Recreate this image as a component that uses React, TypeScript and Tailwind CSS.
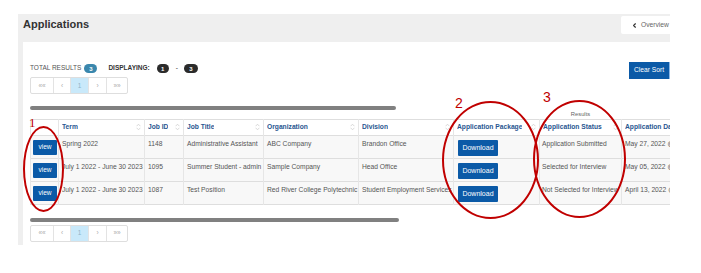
import { ChevronLeft } from 'lucide-react';

const rows = [
    {
        term: 'Spring 2022',
        jobId: '1148',
        title: 'Administrative Assistant',
        org: 'ABC Company',
        division: 'Brandon Office',
        status: 'Application Submitted',
        date: 'May 27, 2022 @ 10:42 AM'
    },
    {
        term: 'July 1 2022 - June 30 2023',
        jobId: '1095',
        title: 'Summer Student - admin',
        org: 'Sample Company',
        division: 'Head Office',
        status: 'Selected for Interview',
        date: 'May 05, 2022 @ 2:15 PM'
    },
    {
        term: 'July 1 2022 - June 30 2023',
        jobId: '1087',
        title: 'Test Position',
        org: 'Red River College Polytechnic',
        division: 'Student Employment Services',
        status: 'Not Selected for Interview',
        date: 'April 13, 2022 @ 9:03 AM'
    }
];

const columns = [
    { label: '', width: 'w-[28px]', sort: false },
    { label: 'Term', width: 'w-[86px]', sort: true },
    { label: 'Job ID', width: 'w-[39px]', sort: true },
    { label: 'Job Title', width: 'w-[80px]', sort: true },
    { label: 'Organization', width: 'w-[95px]', sort: true },
    { label: 'Division', width: 'w-[95px]', sort: true },
    { label: 'Application Package', width: 'w-[86px]', sort: true },
    { label: 'Application Status', width: 'w-[82px]', sort: true },
    { label: 'Application Date', width: 'w-[80px]', sort: true }
];

const SortIcon = () => (
    <svg width="5" height="8" viewBox="0 0 5 8" className="shrink-0">
        <path d="M0.6 3.2 L2.5 1.2 L4.4 3.2 M0.6 4.8 L2.5 6.8 L4.4 4.8" fill="none" stroke="#cfcfcf" strokeWidth="0.8" />
    </svg>
);

const Pagination = () => {
    const items = [
        { label: '««', w: 'w-[22px]' },
        { label: '‹', w: 'w-[17px]' },
        { label: '1', w: 'w-[18px]', active: true },
        { label: '›', w: 'w-[18px]' },
        { label: '»»', w: 'w-[21px]' }
    ];
    return (
        <div className="flex w-fit rounded-[2px] border border-[#dedede] text-[6.5px] text-[#aaa]">
            {items.map((item, i) => (
                <span
                    key={i}
                    className={`flex h-[15px] items-center justify-center ${item.w} ${i > 0 ? 'border-l border-[#e3e3e3]' : ''} ${item.active ? 'bg-[#c9e9fa] text-[#8fb4c8]' : ''}`}
                >
                    {item.label}
                </span>
            ))}
        </div>
    );
};

export default function App() {
    return (
        <div className="relative h-[273px] w-[701px] overflow-hidden bg-white font-['Liberation_Sans',Arial,sans-serif]">
            <div className="pt-[14px] pl-[18px]">
                <section className="w-[652px] overflow-hidden bg-[#efefef] pl-[5px]">
                    {/* Title bar */}
                    <div className="flex h-[28px] items-start">
                        <h1 className="mt-[5px] text-[11px] font-bold leading-none text-[#333]">Applications</h1>
                        <button className="ml-auto mr-[-11px] mt-[2px] flex h-[18px] w-[60px] shrink-0 items-center gap-[3px] rounded-[2px] bg-white pl-[10px] text-[6.7px] text-[#666]">
                            <ChevronLeft size={7} strokeWidth={4} className="text-[#333]" />
                            Overview
                        </button>
                    </div>

                    {/* Card */}
                    <div className="w-[693px] bg-white px-[7px] pb-[3px]">
                        <div className="flex items-start">
                            <div className="pt-[22px]">
                                <div className="flex h-[9px] items-center text-[6.5px] leading-none">
                                    <span className="text-[#555]">TOTAL RESULTS</span>
                                    <span className="ml-[3px] flex h-[9px] w-[13px] items-center justify-center rounded-full bg-[#3a87ad] text-[6px] font-bold text-white">3</span>
                                    <span className="ml-[11px] font-bold text-[#333]">DISPLAYING:</span>
                                    <span className="ml-[7px] flex h-[9px] w-[12px] items-center justify-center rounded-full bg-[#2b2b2b] text-[6px] font-bold text-white">1</span>
                                    <span className="ml-[7px] text-[#333]">-</span>
                                    <span className="ml-[6px] flex h-[9px] w-[14px] items-center justify-center rounded-full bg-[#2b2b2b] text-[6px] font-bold text-white">3</span>
                                </div>
                                <div className="mt-[4px]">
                                    <Pagination />
                                </div>
                            </div>
                            <div className="ml-auto mt-[20px] flex">
                                <button className="h-[17px] w-[40px] bg-[#0b5aa7] text-[6.7px] text-white">Clear Sort</button>
                                {/* next toolbar button, only its edge is in view */}
                                <span className="h-[17px] w-[40px] border-l-2 border-[#8db8e6] bg-[#0b5aa7]" />
                            </div>
                        </div>

                        <div className="mt-[12px] h-[4px] w-[366px] rounded-full bg-[#808080]" />

                        <table className="w-[671px] table-fixed border-collapse text-[6.7px]">
                            <colgroup>
                                {columns.map((c, i) => (
                                    <col key={i} className={c.width} />
                                ))}
                            </colgroup>
                            <thead>
                                <tr className="h-[9px]">
                                    <th colSpan={7} />
                                    <th className="pt-[1px] text-center text-[5.8px] font-normal leading-none text-[#666]">Results</th>
                                    <th />
                                </tr>
                                <tr className="h-[16px] border-y border-[#dedede]">
                                    {columns.map((c, i) => (
                                        <th key={i} className="overflow-hidden whitespace-nowrap border-x border-[#e6e6e6] px-[3px] text-left font-bold text-[#285690]">
                                            {c.label && (
                                                <div className="flex items-center justify-between gap-[2px]">
                                                    <span className="overflow-hidden">{c.label}</span>
                                                    {c.sort && <SortIcon />}
                                                </div>
                                            )}
                                        </th>
                                    ))}
                                </tr>
                            </thead>
                            <tbody className="text-[#555]">
                                {rows.map((r, i) => (
                                    <tr key={i} className="border-b border-[#dedede] bg-[#f8f8f8] align-top leading-[8px]">
                                        <td className="border-x border-[#e6e6e6] pl-[2px] pt-[4px] pb-[3px]">
                                            <button className="h-[15px] w-[24px] rounded-[1px] bg-[#0b5aa7] text-[6.5px] text-white">view</button>
                                        </td>
                                        <td className="overflow-hidden whitespace-nowrap border-x border-[#e6e6e6] px-[3px] pt-[4px]">{r.term}</td>
                                        <td className="overflow-hidden whitespace-nowrap border-x border-[#e6e6e6] px-[3px] pt-[4px]">{r.jobId}</td>
                                        <td className="overflow-hidden whitespace-nowrap border-x border-[#e6e6e6] px-[3px] pt-[4px]">{r.title}</td>
                                        <td className="overflow-hidden whitespace-nowrap border-x border-[#e6e6e6] px-[3px] pt-[4px]">{r.org}</td>
                                        <td className="overflow-hidden whitespace-nowrap border-x border-[#e6e6e6] px-[3px] pt-[4px]">{r.division}</td>
                                        <td className="border-x border-[#e6e6e6] pl-[4px] pt-[4px]">
                                            <button className="h-[16px] w-[40px] rounded-[1px] bg-[#0b5aa7] text-[7px] text-white">Download</button>
                                        </td>
                                        <td className="overflow-hidden whitespace-nowrap border-x border-[#e6e6e6] px-[2px] pt-[4px]">{r.status}</td>
                                        <td className="overflow-hidden whitespace-nowrap border-x border-[#e6e6e6] px-[3px] pt-[4px]">{r.date}</td>
                                    </tr>
                                ))}
                            </tbody>
                        </table>

                        <div className="mt-[13px] h-[4px] w-[369px] rounded-full bg-[#808080]" />
                        <div className="mt-[3px]">
                            <Pagination />
                        </div>
                    </div>
                </section>
            </div>

            {/* Red annotation marks */}
            <span className="absolute left-[29px] top-[116px] font-['Liberation_Serif',serif] text-[13px] leading-none text-[#c00000]">1</span>
            <div className="absolute left-[23px] top-[126px] h-[86px] w-[41px] rounded-[50%] border-2 border-[#c00000]" />
            <span className="absolute left-[455px] top-[96px] text-[14px] leading-none text-[#c00000]">2</span>
            <div className="absolute left-[442px] top-[101px] h-[118px] w-[97px] rounded-[50%] border-2 border-[#c00000]" />
            <span className="absolute left-[543px] top-[90px] text-[14px] leading-none text-[#c00000]">3</span>
            <div className="absolute left-[533px] top-[100px] h-[118px] w-[93px] rounded-[50%] border-2 border-[#c00000]" />
        </div>
    );
}
